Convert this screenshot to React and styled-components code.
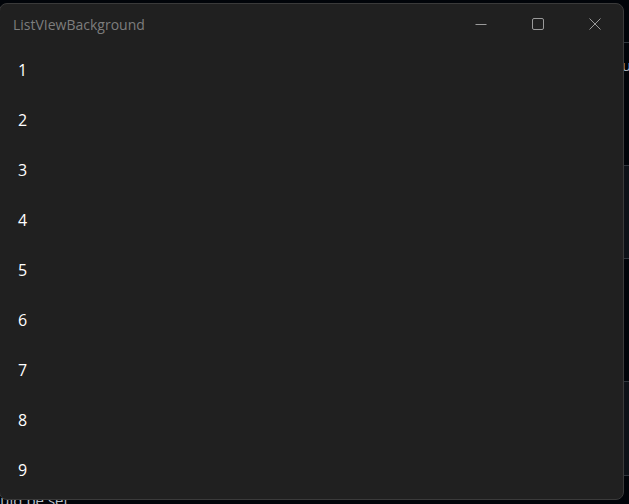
import React from "react";
import styled, { createGlobalStyle } from "styled-components";

const GlobalStyle = createGlobalStyle`
    html, body {
        margin: 0;
        padding: 0;
        background: #010409;
    }
    body {
        font-family: "Open Sans", "Noto Sans", sans-serif;
        overflow: hidden;
    }
`;

const items = [1, 2, 3, 4, 5, 6, 7, 8, 9];

// rows of the page that lies behind the window (only a sliver is visible)
const backRows = [
    { height: 124, shade: false, text: "u" },
    { height: 94, shade: true, text: "" },
    { height: 124, shade: false, text: "" },
    { height: 95, shade: true, text: "" },
];

const App = () => {
    return (
        <>
            <GlobalStyle />
            <Desktop>
                <BackPage>
                    <BackTable>
                        {backRows.map((row, i) => (
                            <BackRow key={i} height={row.height} shade={row.shade}>
                                {row.text}
                            </BackRow>
                        ))}
                    </BackTable>
                    <BackText>should be set</BackText>
                </BackPage>
                <Window>
                    <TitleBar>
                        <Title>ListVIewBackground</Title>
                        <Caption>
                            <CaptionButton aria-label="Minimize">
                                <svg width="12" height="12" viewBox="0 0 12 12">
                                    <path d="M0.5 6.5h11" stroke="currentColor" strokeWidth="1" fill="none" />
                                </svg>
                            </CaptionButton>
                            <CaptionButton aria-label="Maximize">
                                <svg width="12" height="12" viewBox="0 0 12 12">
                                    <rect x="0.5" y="0.5" width="11" height="11" rx="1.5" stroke="currentColor" strokeWidth="1" fill="none" />
                                </svg>
                            </CaptionButton>
                            <CaptionButton aria-label="Close">
                                <svg width="12" height="12" viewBox="0 0 12 12">
                                    <path d="M0.5 0.5l11 11M11.5 0.5l-11 11" stroke="currentColor" strokeWidth="1" fill="none" />
                                </svg>
                            </CaptionButton>
                        </Caption>
                    </TitleBar>
                    <List>
                        {items.map((n) => (
                            <Item key={n}>{n}</Item>
                        ))}
                    </List>
                </Window>
            </Desktop>
        </>
    );
};

export default App;

const Desktop = styled.div`
    position: relative;
    width: 629px;
    height: 504px;
    overflow: hidden;
    background: #010409;
`;

const BackPage = styled.div`
    display: flex;
    flex-direction: column;
    padding-top: 42px;
`;

const BackTable = styled.div`
    display: flex;
    flex-direction: column;
    margin-left: 560px;
    border-top: 1px solid #30363d;
`;

const BackRow = styled.div`
    height: ${({ height }) => height - 1}px;
    border-bottom: 1px solid #30363d;
    background: ${({ shade }) => (shade ? "#0d1117" : "#010409")};
    color: #b4bac1;
    font-size: 15px;
    padding: 12px 0 0 62px;
    box-sizing: border-box;
`;

const BackText = styled.div`
    margin-top: 14px;
    margin-left: -25px;
    color: #b9bfc6;
    font-size: 15px;
    line-height: 20px;
    white-space: nowrap;
`;

const Window = styled.div`
    position: absolute;
    left: -1px;
    top: 3px;
    width: 625px;
    height: 497px;
    box-sizing: border-box;
    background: #202020;
    border: 1px solid #3a3a3a;
    border-radius: 8px;
    display: flex;
    flex-direction: column;
    overflow: hidden;
`;

const TitleBar = styled.div`
    height: 40px;
    display: flex;
    align-items: center;
    justify-content: space-between;
    flex-shrink: 0;
`;

const Title = styled.span`
    padding-left: 13px;
    font-size: 14px;
    color: #7d7d7d;
`;

const Caption = styled.div`
    display: flex;
    align-self: stretch;
    margin-top: -1px;
`;

const CaptionButton = styled.div`
    width: 57px;
    display: flex;
    align-items: center;
    justify-content: center;
    color: #9a9a9a;
`;

const List = styled.div`
    display: flex;
    flex-direction: column;
    padding-top: 1px;
`;

const Item = styled.div`
    height: 50px;
    display: flex;
    align-items: center;
    padding-left: 18px;
    font-size: 16px;
    color: #ffffff;
`;
